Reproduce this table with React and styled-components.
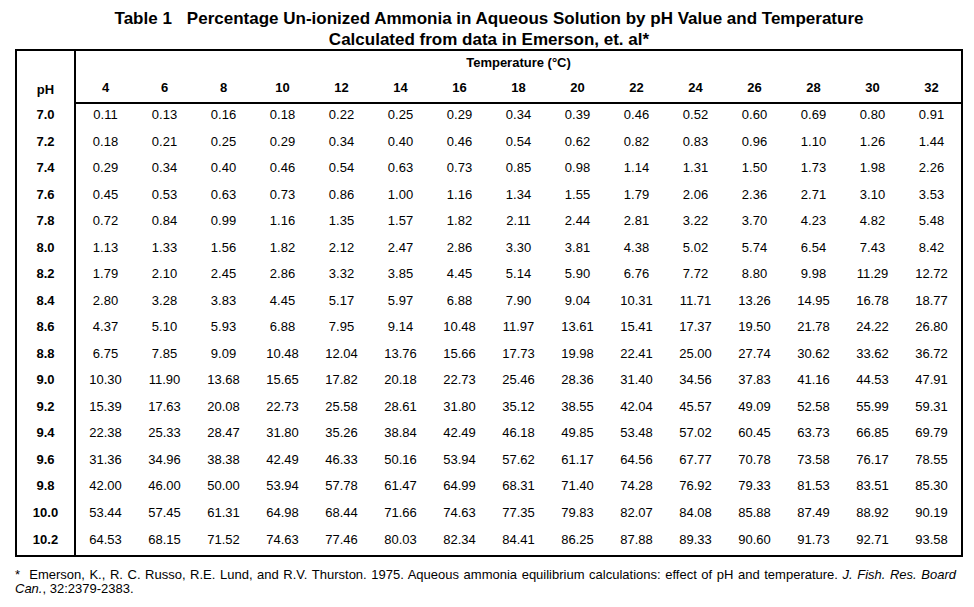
import React from "react";
import styled, { createGlobalStyle } from "styled-components";

const Global = createGlobalStyle`
  html, body { margin: 0; padding: 0; background: #fff; }
  body { font-family: "Liberation Sans", Arial, sans-serif; color: #000; }
`;

const Page = styled.div`
  width: 948px;
  margin-left: 15px;
  padding-top: 8px;
`;

const Title = styled.h1`
  margin: 0;
  font-size: 17px;
  line-height: 21px;
  font-weight: bold;
  text-align: center;
`;

const TableNo = styled.span`
  margin-right: 15px;
`;

const Grid = styled.div`
  box-sizing: border-box;
  width: 948px;
  margin-top: -1px;
  border: 2px solid #000;
  display: grid;
  grid-template-columns: 59px repeat(15, 1fr);
  grid-template-rows: 25px 28px repeat(17, 26.53px);
  font-size: 13px;
`;

const Cell = styled.div`
  box-sizing: border-box;
  display: flex;
  align-items: center;
  justify-content: center;
  padding-bottom: 5px;
  white-space: nowrap;
`;

const PhHead = styled(Cell)`
  grid-column: 1;
  grid-row: 1 / 3;
  align-items: flex-end;
  padding-bottom: 7px;
  border-right: 2px solid #000;
  font-weight: bold;
`;

const TempTitle = styled(Cell)`
  grid-column: 2 / -1;
  grid-row: 1;
  font-weight: bold;
  padding-bottom: 2px;
`;

const TempCell = styled(Cell)`
  font-weight: bold;
  border-bottom: 2px solid #000;
  padding-bottom: 3px;
`;

const PhCell = styled(Cell)`
  font-weight: bold;
  border-right: 2px solid #000;
`;

const Value = styled(Cell)``;

const Footnote = styled.div`
  width: 941px;
  margin-top: 11px;
  font-size: 13px;
  line-height: 14px;
`;

const FootLine = styled.div`
  white-space: nowrap;
  text-align: ${(p) => (p.$justify ? "justify" : "left")};
  text-align-last: ${(p) => (p.$justify ? "justify" : "auto")};
`;

const temps = [4, 6, 8, 10, 12, 14, 16, 18, 20, 22, 24, 26, 28, 30, 32];

const rows = [
  ["7.0", "0.11 0.13 0.16 0.18 0.22 0.25 0.29 0.34 0.39 0.46 0.52 0.60 0.69 0.80 0.91"],
  ["7.2", "0.18 0.21 0.25 0.29 0.34 0.40 0.46 0.54 0.62 0.82 0.83 0.96 1.10 1.26 1.44"],
  ["7.4", "0.29 0.34 0.40 0.46 0.54 0.63 0.73 0.85 0.98 1.14 1.31 1.50 1.73 1.98 2.26"],
  ["7.6", "0.45 0.53 0.63 0.73 0.86 1.00 1.16 1.34 1.55 1.79 2.06 2.36 2.71 3.10 3.53"],
  ["7.8", "0.72 0.84 0.99 1.16 1.35 1.57 1.82 2.11 2.44 2.81 3.22 3.70 4.23 4.82 5.48"],
  ["8.0", "1.13 1.33 1.56 1.82 2.12 2.47 2.86 3.30 3.81 4.38 5.02 5.74 6.54 7.43 8.42"],
  ["8.2", "1.79 2.10 2.45 2.86 3.32 3.85 4.45 5.14 5.90 6.76 7.72 8.80 9.98 11.29 12.72"],
  ["8.4", "2.80 3.28 3.83 4.45 5.17 5.97 6.88 7.90 9.04 10.31 11.71 13.26 14.95 16.78 18.77"],
  ["8.6", "4.37 5.10 5.93 6.88 7.95 9.14 10.48 11.97 13.61 15.41 17.37 19.50 21.78 24.22 26.80"],
  ["8.8", "6.75 7.85 9.09 10.48 12.04 13.76 15.66 17.73 19.98 22.41 25.00 27.74 30.62 33.62 36.72"],
  ["9.0", "10.30 11.90 13.68 15.65 17.82 20.18 22.73 25.46 28.36 31.40 34.56 37.83 41.16 44.53 47.91"],
  ["9.2", "15.39 17.63 20.08 22.73 25.58 28.61 31.80 35.12 38.55 42.04 45.57 49.09 52.58 55.99 59.31"],
  ["9.4", "22.38 25.33 28.47 31.80 35.26 38.84 42.49 46.18 49.85 53.48 57.02 60.45 63.73 66.85 69.79"],
  ["9.6", "31.36 34.96 38.38 42.49 46.33 50.16 53.94 57.62 61.17 64.56 67.77 70.78 73.58 76.17 78.55"],
  ["9.8", "42.00 46.00 50.00 53.94 57.78 61.47 64.99 68.31 71.40 74.28 76.92 79.33 81.53 83.51 85.30"],
  ["10.0", "53.44 57.45 61.31 64.98 68.44 71.66 74.63 77.35 79.83 82.07 84.08 85.88 87.49 88.92 90.19"],
  ["10.2", "64.53 68.15 71.52 74.63 77.46 80.03 82.34 84.41 86.25 87.88 89.33 90.60 91.73 92.71 93.58"],
];

export default function App() {
  return (
    <>
      <Global />
      <Page>
        <Title>
          <TableNo>Table 1</TableNo>Percentage Un-ionized Ammonia in Aqueous Solution by pH Value and Temperature
          <br />
          Calculated from data in Emerson, et. al*
        </Title>
        <Grid>
          <PhHead>pH</PhHead>
          <TempTitle>Temperature (°C)</TempTitle>
          {temps.map((t) => (
            <TempCell key={t}>{t}</TempCell>
          ))}
          {rows.map(([ph, vals]) => (
            <React.Fragment key={ph}>
              <PhCell>{ph}</PhCell>
              {vals.split(" ").map((v, i) => (
                <Value key={i}>{v}</Value>
              ))}
            </React.Fragment>
          ))}
        </Grid>
        <Footnote>
          <FootLine $justify>
            *&nbsp;&nbsp;Emerson, K., R. C. Russo, R.E. Lund, and R.V. Thurston. 1975. Aqueous ammonia equilibrium calculations: effect of pH and temperature. <i>J. Fish. Res. Board</i>
          </FootLine>
          <FootLine>
            <i>Can.</i>, 32:2379-2383.
          </FootLine>
        </Footnote>
      </Page>
    </>
  );
}
